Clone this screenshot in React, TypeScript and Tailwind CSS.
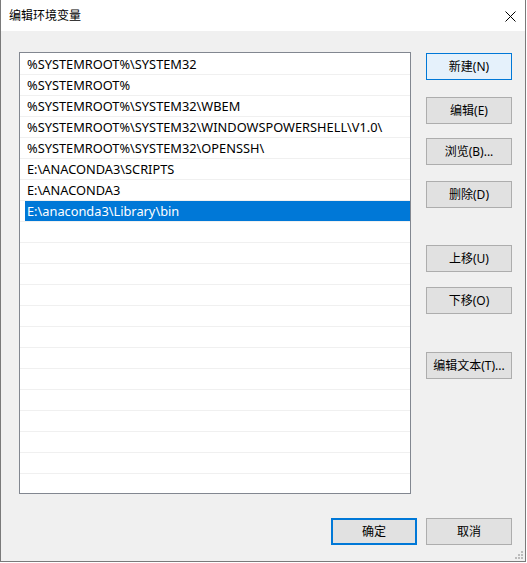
import React from 'react'

const paths = [
  '%SYSTEMROOT%\\SYSTEM32',
  '%SYSTEMROOT%',
  '%SYSTEMROOT%\\SYSTEM32\\WBEM',
  '%SYSTEMROOT%\\SYSTEM32\\WINDOWSPOWERSHELL\\V1.0\\',
  '%SYSTEMROOT%\\SYSTEM32\\OPENSSH\\',
  'E:\\ANACONDA3\\SCRIPTS',
  'E:\\ANACONDA3',
  'E:\\anaconda3\\Library\\bin',
]

const selected = 7
const font = { fontFamily: '"Noto Sans", "Noto Sans CJK SC", sans-serif' }

function Btn({ label, className = '' }: { label: string; className?: string }) {
  return (
    <div
      className={`w-[86px] h-[27px] flex items-center justify-center text-[12px] text-black border ${className}`}
    >
      {label}
    </div>
  )
}

export default function App() {
  const rows = Array.from({ length: 22 }, (_, i) => paths[i] ?? '')

  return (
    <div className="w-[527px] h-[563px] bg-white" style={font}>
      <div className="w-[526px] h-[562px] flex flex-col border-l border-r border-b border-[#7a7a7a] relative">
        {/* title bar */}
        <div className="h-[31px] bg-white flex items-center justify-between pl-[8px] pr-[9px]">
          <span className="text-[12px] text-black leading-none">编辑环境变量</span>
          <svg width="11" height="11" viewBox="0 0 11 11" className="mt-[1px]">
            <path d="M0.5 0.5 L10.5 10.5 M10.5 0.5 L0.5 10.5" stroke="#000" strokeWidth="1" />
          </svg>
        </div>

        {/* body */}
        <div className="flex-1 bg-[#f0f0f0] flex flex-col pl-[18px] pr-[13px] pt-[21px]">
          <div className="flex">
            <div className="w-[392px] h-[442px] bg-white border border-[#828790] overflow-hidden pt-[1px]">
              {rows.map((r, i) => (
                <div key={i} className="h-[21px] border-b border-[#f0f0f0] flex">
                  {i === selected ? (
                    <div className="ml-[5px] flex-1 bg-[#0078d7] text-white text-[12.8px] flex items-center pl-[2px] pt-[1px]">
                      {r}
                    </div>
                  ) : (
                    <div className="flex-1 text-black text-[12.8px] flex items-center pl-[7px] pt-[1px]">{r}</div>
                  )}
                </div>
              ))}
            </div>

            <div className="ml-[15px] flex flex-col pt-[1px]">
              <Btn label="新建(N)" className="bg-[#e5f1fb] border-[#0078d7]" />
              <Btn label="编辑(E)" className="mt-[17px] bg-[#e1e1e1] border-[#adadad]" />
              <Btn label="浏览(B)..." className="mt-[14px] bg-[#e1e1e1] border-[#adadad]" />
              <Btn label="删除(D)" className="mt-[16px] bg-[#e1e1e1] border-[#adadad]" />
              <Btn label="上移(U)" className="mt-[37px] bg-[#e1e1e1] border-[#adadad]" />
              <Btn label="下移(O)" className="mt-[15px] bg-[#e1e1e1] border-[#adadad]" />
              <Btn label="编辑文本(T)..." className="mt-[38px] bg-[#e1e1e1] border-[#adadad]" />
            </div>
          </div>

          <div className="mt-[24px] flex justify-end gap-[9px]">
            <Btn label="确定" className="bg-[#e1e1e1] border-2 border-[#0078d7]" />
            <Btn label="取消" className="bg-[#e1e1e1] border-[#adadad]" />
          </div>
        </div>

        {/* resize grip */}
        <div className="absolute right-[2px] bottom-[2px] grid grid-cols-3 gap-[1px]">
          {[0, 0, 1, 0, 1, 1, 1, 1, 1].map((v, i) => (
            <div key={i} className={`w-[2px] h-[2px] ${v ? 'bg-[#bcbcbc]' : ''}`} />
          ))}
        </div>
      </div>
    </div>
  )
}
